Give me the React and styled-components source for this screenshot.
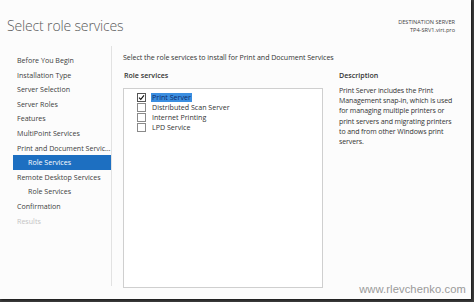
import React from "react";
import styled, { createGlobalStyle } from "styled-components";

const Global = createGlobalStyle`
  html, body { margin: 0; padding: 0; background: #3c3c3c; }
  body { width: 474px; height: 302px; overflow: hidden; font-family: "Open Sans", "Noto Sans", sans-serif; }
`;

const Screen = styled.div`
  width: 474px;
  height: 302px;
  background: #3c3c3c;
  position: relative;
`;

const Window = styled.div`
  width: 471px;
  height: 299px;
  background: #fcfcfc;
  display: flex;
  flex-direction: column;
  box-shadow: 1px 1px 2px rgba(0,0,0,0.6);
`;

const Header = styled.div`
  height: 46px;
  display: flex;
  justify-content: space-between;
  align-items: flex-start;
  padding: 0 16px 0 7px;
`;

const Title = styled.h1`
  margin: 16px 0 0 0;
  font-family: "Open Sans", sans-serif;
  font-weight: 300;
  font-size: 14px;
  line-height: 20px;
  color: #5a5a5a;
  letter-spacing: -0.15px;
`;

const Dest = styled.div`
  margin-top: 19px;
  text-align: right;
  font-size: 5.6px;
  line-height: 7.5px;
  color: #444;
`;

const Body = styled.div`
  flex: 1;
  display: flex;
  min-height: 0;
`;

const Nav = styled.div`
  width: 111px;
  margin-bottom: 13px;
  border-right: 1px solid #e2e2e2;
  padding-top: 7px;
  display: flex;
  flex-direction: column;
`;

const NavItem = styled.div`
  height: 14.6px;
  line-height: 14.6px;
  font-size: 7.1px;
  white-space: nowrap;
  overflow: hidden;
  text-overflow: ellipsis;
  padding-left: ${p => (p.$sub ? 15 : 4)}px;
  margin-left: 13px;
  color: ${p => (p.$active ? "#ffffff" : p.$disabled ? "#c4c4c4" : "#3c3c3c")};
  background: ${p => (p.$active ? "#1d6fc1" : "transparent")};
`;

const Content = styled.div`
  flex: 1;
  display: flex;
  flex-direction: column;
  padding-left: 11px;
  padding-top: 6px;
`;

const Intro = styled.div`
  font-size: 7.1px;
  line-height: 10px;
  color: #333;
  white-space: nowrap;
  letter-spacing: -0.05px;
`;

const Columns = styled.div`
  display: flex;
  gap: 15px;
  margin-top: 8px;
  flex: 1;
  min-height: 0;
`;

const LeftCol = styled.div`
  width: 200px;
  display: flex;
  flex-direction: column;
`;

const ColHead = styled.div`
  font-size: 7.1px;
  font-weight: 600;
  line-height: 10px;
  color: #333;
  padding-left: 1px;
`;

const ListBox = styled.div`
  margin-top: 8px;
  height: 200px;
  box-sizing: border-box;
  border: 1px solid #cfcfcf;
  background: #ffffff;
  padding: 4px 0 0 13px;
  display: flex;
  flex-direction: column;
`;

const Row = styled.div`
  display: flex;
  align-items: center;
  height: 9.8px;
  gap: 5px;
`;

const Box = styled.span`
  width: 7px;
  height: 7px;
  border: 1px solid ${p => (p.$checked ? "#555" : "#8a8a8a")};
  background: #fff;
  display: flex;
  align-items: center;
  justify-content: center;
`;

const Label = styled.span`
  font-size: 7.1px;
  line-height: 9px;
  color: ${p => (p.$sel ? "#0b2a6a" : "#333")};
  background: ${p => (p.$sel ? "#3b8ee0" : "transparent")};
  padding: 0 1px;
`;

const RightCol = styled.div`
  width: 115px;
  display: flex;
  flex-direction: column;
`;

const DescText = styled.div`
  margin-top: 6px;
  font-size: 7px;
  line-height: 10.2px;
  color: #333;
  padding-left: 1px;
  letter-spacing: -0.1px;
  span { display: block; white-space: nowrap; }
`;

const Watermark = styled.div`
  position: absolute;
  right: 8px;
  bottom: 7px;
  font-family: "Liberation Sans", Arial, sans-serif;
  font-size: 11.2px;
  color: #9a9a9a;
  letter-spacing: 0.1px;
`;

const navItems = [
  { t: "Before You Begin" },
  { t: "Installation Type" },
  { t: "Server Selection" },
  { t: "Server Roles" },
  { t: "Features" },
  { t: "MultiPoint Services" },
  { t: "Print and Document Services" },
  { t: "Role Services", sub: true, active: true },
  { t: "Remote Desktop Services" },
  { t: "Role Services", sub: true },
  { t: "Confirmation" },
  { t: "Results", disabled: true },
];

const services = [
  { t: "Print Server", checked: true },
  { t: "Distributed Scan Server" },
  { t: "Internet Printing" },
  { t: "LPD Service" },
];

export default function App() {
  return (
    <Screen>
      <Global />
      <Window>
        <Header>
          <Title>Select role services</Title>
          <Dest>
            <div>DESTINATION SERVER</div>
            <div>TP4-SRV1.virt.pro</div>
          </Dest>
        </Header>
        <Body>
          <Nav>
            {navItems.map((n, i) => (
              <NavItem key={i} $sub={n.sub} $active={n.active} $disabled={n.disabled}>
                {n.t}
              </NavItem>
            ))}
          </Nav>
          <Content>
            <Intro>Select the role services to install for Print and Document Services</Intro>
            <Columns>
              <LeftCol>
                <ColHead>Role services</ColHead>
                <ListBox>
                  {services.map((s, i) => (
                    <Row key={i}>
                      <Box $checked={s.checked}>
                        {s.checked && (
                          <svg width="7" height="7" viewBox="0 0 7 7">
                            <path d="M1 3.6 L2.8 5.4 L6 1.4" fill="none" stroke="#111" strokeWidth="1.1" />
                          </svg>
                        )}
                      </Box>
                      <Label $sel={s.checked}>{s.t}</Label>
                    </Row>
                  ))}
                </ListBox>
              </LeftCol>
              <RightCol>
                <ColHead>Description</ColHead>
                <DescText>
                  <span>Print Server includes the Print</span>
                  <span>Management snap-in, which is used</span>
                  <span>for managing multiple printers or</span>
                  <span>print servers and migrating printers</span>
                  <span>to and from other Windows print</span>
                  <span>servers.</span>
                </DescText>
              </RightCol>
            </Columns>
          </Content>
        </Body>
      </Window>
      <Watermark>www.rlevchenko.com</Watermark>
    </Screen>
  );
}
